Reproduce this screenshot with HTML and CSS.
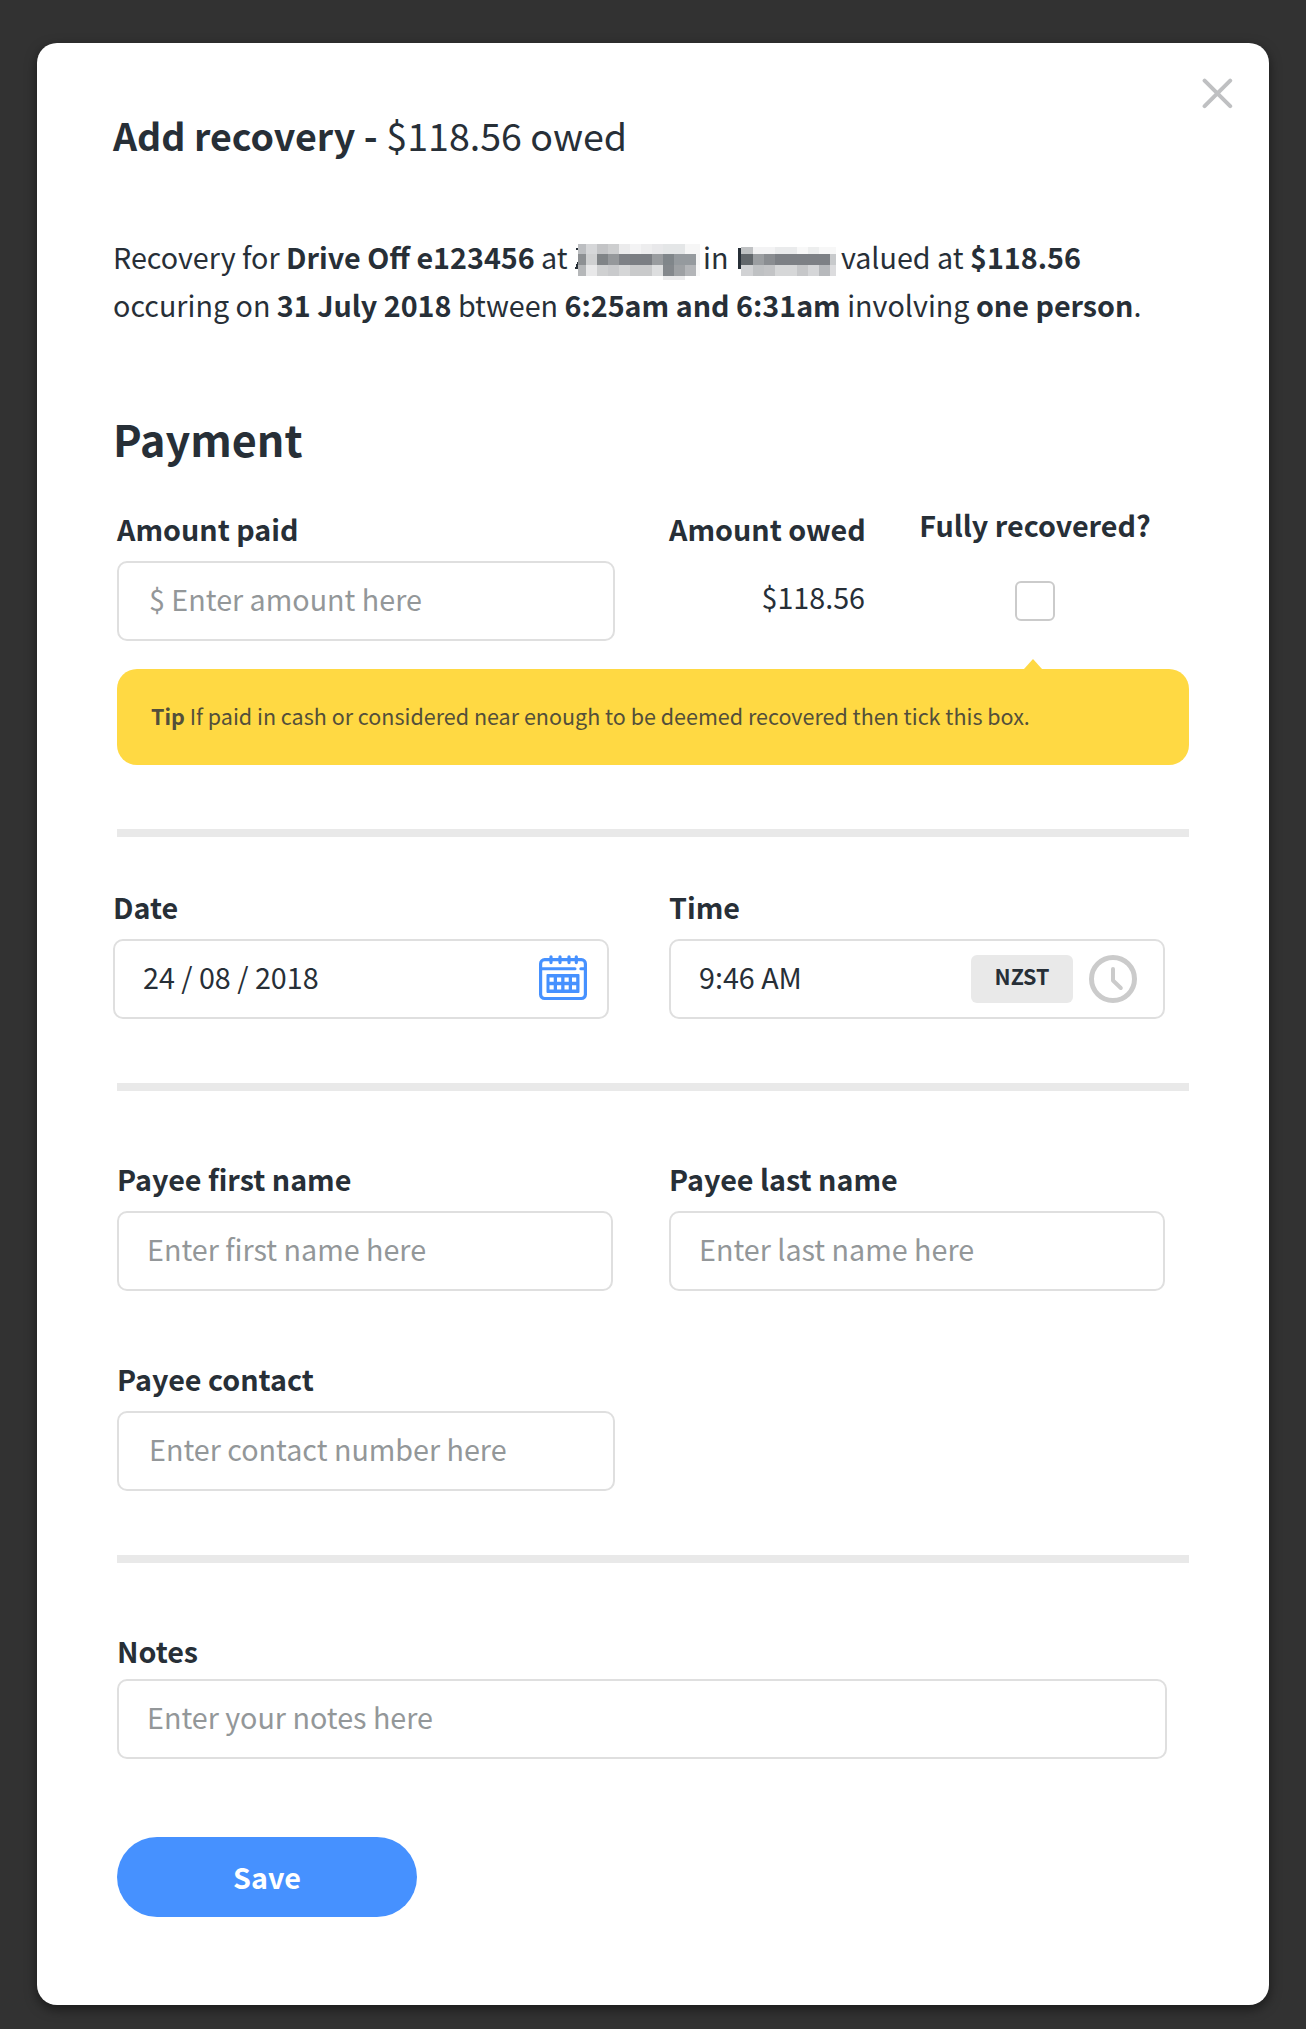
FILE: index.html
```
<!DOCTYPE html>
<html lang="en">
<head>
    <meta charset="UTF-8">
    <meta name="viewport" content="width=device-width, initial-scale=1.0">
    <title>Add recovery</title>
    <link rel="stylesheet" href="styles.css">
</head>
<body>
    <div class="modal">
        <button class="close" aria-label="Close">
            <svg width="31" height="31" viewBox="0 0 31 31" fill="none" stroke="#bfc0c2" stroke-width="4" stroke-linecap="round">
                <path d="M2.6 2.6L28.2 28.2M28.2 2.6L2.6 28.2"/>
            </svg>
        </button>

        <h1>Add recovery - <span>$118.56 owed</span></h1>

        <p class="summary">
            Recovery for <b>Drive Off e123456</b> at
            <svg class="redacted site" width="127" height="40" viewBox="575 240 127 40" shape-rendering="crispEdges">
                <path fill="#272f37" d="M577 248h2v2h-2zM578 262h1v5h-1zM577 264h2v3h-2zM576 267h3v2h-3z"/>
                <g transform="translate(0 244)">
                    <path fill="#bcbec1" d="M579 0h8v10h-8z"/><path fill="#d6d7d9" d="M587 0h11v10h-11z"/>
                    <path fill="#c3c4c6" d="M598 0h11v10h-11z"/><path fill="#cdcecf" d="M609 0h11v10h-11z"/>
                    <path fill="#ebebec" d="M620 0h11v10h-11z"/><path fill="#f3f3f4" d="M631 0h11v10h-11z"/>
                    <path fill="#ededee" d="M642 0h11v10h-11z"/><path fill="#e8e8ea" d="M653 0h11v10h-11z"/>
                    <path fill="#e4e6e7" d="M664 0h22v10h-22z"/><path fill="#f6f6f6" d="M686 0h15v10h-15z"/>
                </g>
                <g transform="translate(0 254)">
                    <path fill="#8d9093" d="M579 0h8v11h-8z"/><path fill="#cfd0d1" d="M587 0h11v11h-11z"/>
                    <path fill="#808487" d="M598 0h11v11h-11z"/><path fill="#95989b" d="M609 0h11v11h-11z"/>
                    <path fill="#7e8186" d="M620 0h11v11h-11z"/><path fill="#7b7e83" d="M631 0h22v11h-22z"/>
                    <path fill="#999c9f" d="M653 0h11v11h-11z"/><path fill="#80868a" d="M664 0h11v11h-11z"/>
                    <path fill="#959a9e" d="M675 0h22v11h-22z"/><path fill="#f5f5f5" d="M697 0h4v11h-4z"/>
                </g>
                <g transform="translate(0 265)">
                    <path fill="#b5b7b9" d="M579 0h8v11h-8z"/><path fill="#e8e8e9" d="M587 0h11v11h-11z"/>
                    <path fill="#cfd0d1" d="M598 0h11v11h-11z"/><path fill="#c9cacc" d="M609 0h11v11h-11z"/>
                    <path fill="#d5d6d7" d="M620 0h11v11h-11z"/><path fill="#c9cacb" d="M631 0h22v11h-22z"/>
                    <path fill="#dddedf" d="M653 0h11v11h-11z"/><path fill="#84888c" d="M664 0h11v11h-11z"/>
                    <path fill="#9ea1a4" d="M675 0h11v11h-11z"/><path fill="#b3b5b8" d="M686 0h11v11h-11z"/>
                    <path fill="#f8f8f8" d="M697 0h4v11h-4z"/><path fill="#ececed" d="M664 11h22v4h-22z"/>
                </g>
            </svg>in
            <svg class="redacted town" width="98" height="40" viewBox="738 240 98 40" shape-rendering="crispEdges">
                <path fill="#272f37" d="M738 248h3v21h-3z"/>
                <g transform="translate(0 247)">
                    <path fill="#c0c2c4" d="M741 0h12v7h-12z"/><path fill="#f3f3f4" d="M753 0h22v7h-22z"/>
                    <path fill="#eaebec" d="M775 0h22v7h-22z"/><path fill="#f8f8f8" d="M797 0h11v7h-11z"/>
                    <path fill="#edeeee" d="M808 0h11v7h-11z"/><path fill="#f7f7f7" d="M819 0h17v7h-17z"/>
                </g>
                <g transform="translate(0 254)">
                    <path fill="#62676b" d="M741 0h12v11h-12z"/><path fill="#9b9ea1" d="M753 0h11v11h-11z"/>
                    <path fill="#8a8d91" d="M764 0h11v11h-11z"/><path fill="#7d8085" d="M775 0h55v11h-55z"/>
                    <path fill="#c8cacc" d="M830 0h6v11h-6z"/>
                </g>
                <g transform="translate(0 265)">
                    <path fill="#d1d2d4" d="M741 0h12v11h-12z"/><path fill="#bfc1c3" d="M753 0h11v11h-11z"/>
                    <path fill="#c3c4c6" d="M764 0h11v11h-11z"/><path fill="#d6d7d8" d="M775 0h22v11h-22z"/>
                    <path fill="#c6c7c9" d="M797 0h11v11h-11z"/><path fill="#d5d6d8" d="M808 0h11v11h-11z"/>
                    <path fill="#b7b9bc" d="M819 0h11v11h-11z"/><path fill="#dcdcde" d="M830 0h6v11h-6z"/>
                </g>
            </svg>valued at <b>$118.56</b><br>
            occuring on <b>31 July 2018</b> btween <b>6:25am and 6:31am</b> involving <b>one person</b>.
        </p>

        <h2>Payment</h2>

        <div class="row payment">
            <div class="field wide">
                <label for="amount">Amount paid</label>
                <input type="text" id="amount" placeholder="$ Enter amount here">
            </div>
            <div class="owed">
                <span class="label">Amount owed</span>
                <span class="value">$118.56</span>
            </div>
            <div class="recovered">
                <label for="recovered">Fully recovered?</label>
                <input type="checkbox" id="recovered">
            </div>
        </div>

        <div class="tip"><b>Tip</b> If paid in cash or considered near enough to be deemed recovered then tick this box.</div>

        <hr>

        <div class="row when">
            <div class="field">
                <label for="date">Date</label>
                <div class="box">
                    <input type="text" id="date" value="24 / 08 / 2018">
                    <svg class="calendar" width="48" height="46" viewBox="0 0 48 46" fill="none" stroke="#4691ff" stroke-linecap="round">
                        <rect x="1.6" y="4.7" width="44.8" height="38.8" rx="4" stroke-width="3.2"/>
                        <path stroke-width="3.2" d="M12 1.8V7.6M21 1.8V7.6M30 1.8V7.6M37.3 1.8V7.6"/>
                        <path stroke-width="3" d="M2 13.7H36M41.8 13.7H46"/>
                        <path stroke="none" fill="#4691ff" fill-rule="evenodd" d="M8.5 19h31a1 1 0 0 1 1 1v17a1 1 0 0 1-1 1h-31a1 1 0 0 1-1-1V20a1 1 0 0 1 1-1zM10.5 22.5h4.2v4.2h-4.2zM18 22.5h4.2v4.2H18zM25.5 22.5h4.2v4.2h-4.2zM33 22.5h4.2v4.2H33zM10.5 30.3h4.2v4.2h-4.2zM18 30.3h4.2v4.2H18zM25.5 30.3h4.2v4.2h-4.2zM33 30.3h4.2v4.2H33z"/>
                    </svg>
                </div>
            </div>
            <div class="field">
                <label for="time">Time</label>
                <div class="box">
                    <input type="text" id="time" value="9:46 AM">
                    <span class="zone">NZST</span>
                    <svg class="clock" width="48" height="48" viewBox="0 0 48 48" fill="none" stroke="#cbcbcb">
                        <circle cx="24" cy="24" r="21.5" stroke-width="5"/>
                        <path d="M24 14V25.5L31.8 33" stroke-width="4" stroke-linecap="round" stroke-linejoin="round"/>
                    </svg>
                </div>
            </div>
        </div>

        <hr>

        <div class="row">
            <div class="field">
                <label for="first">Payee first name</label>
                <input type="text" id="first" placeholder="Enter first name here">
            </div>
            <div class="field">
                <label for="last">Payee last name</label>
                <input type="text" id="last" placeholder="Enter last name here">
            </div>
        </div>

        <div class="row">
            <div class="field wide">
                <label for="contact">Payee contact</label>
                <input type="text" id="contact" placeholder="Enter contact number here">
            </div>
        </div>

        <hr>

        <div class="row">
            <div class="field notes">
                <label for="notes">Notes</label>
                <input type="text" id="notes" placeholder="Enter your notes here">
            </div>
        </div>

        <button class="save">Save</button>
    </div>
</body>
</html>
```
FILE: styles.css
```
* {
    box-sizing: border-box;
}

body {
    margin: 0;
    padding: 43px 37px 24px;
    background-color: #323232;
    font-family: "Source Sans Pro", "Noto Sans CJK SC", sans-serif;
    font-size: 28.7px;
    color: #272f37;
}

.modal {
    position: relative;
    height: 1962px;
    padding: 68px 80px 88px;
    background-color: #ffffff;
    border-radius: 20px;
    box-shadow: 0 4px 12px rgba(0, 0, 0, 0.5);
}

.close {
    position: absolute;
    top: 35px;
    right: 36px;
    padding: 0;
    border: none;
    background: none;
    cursor: pointer;
}

.close svg {
    display: block;
}

h1 {
    margin: 0 0 74px -4px;
    font-size: 37.6px;
    line-height: 48px;
    font-weight: 700;
}

h1 span {
    font-weight: 400;
}

.summary {
    margin: 0 0 79px -4px;
    line-height: 48px;
    white-space: nowrap;
}

.redacted {
    height: 40px;
    margin-top: -10px;
    vertical-align: -11px;
}

.site {
    margin-right: 2px;
}

.town {
    margin-left: 3px;
    margin-right: 5px;
}

h2 {
    margin: 0 0 40px -4px;
    font-size: 43.1px;
    line-height: 60px;
    font-weight: 700;
}

.row {
    display: flex;
    gap: 56px;
    margin-top: 67px;
}

.payment {
    gap: 0;
    margin-top: 0;
}

.when {
    gap: 60px;
    margin-top: 49px;
    margin-left: -4px;
}

.field {
    width: 496px;
}

.field.wide {
    width: 498px;
}

.field.notes {
    width: 1050px;
}

label, .label {
    display: block;
    margin-bottom: 12px;
    padding-top: 1px;
    line-height: 40px;
    font-weight: 700;
    white-space: nowrap;
}

.notes label {
    margin-bottom: 8px;
}

input[type="text"] {
    display: block;
    width: 100%;
    height: 80px;
    padding: 0 28px 5px 28px;
    border: 2px solid #dfdfdf;
    border-radius: 10px;
    background-color: #ffffff;
    font-family: inherit;
    font-size: inherit;
    color: inherit;
}

.wide input[type="text"] {
    padding-left: 30px;
}

input::placeholder {
    color: #939799;
    opacity: 1;
}

input:focus {
    outline: none;
    border-color: #4691ff;
}

.box {
    display: flex;
    align-items: center;
    height: 80px;
    padding-right: 20px;
    border: 2px solid #dfdfdf;
    border-radius: 10px;
}

.box input[type="text"] {
    flex: 1;
    min-width: 0;
    height: 76px;
    border: none;
}

.calendar {
    margin-top: -3px;
}

.zone {
    width: 102px;
    height: 48px;
    border-radius: 6px;
    background-color: #e9e9e9;
    font-size: 21.5px;
    font-weight: 700;
    line-height: 42px;
    text-align: center;
}

.clock {
    margin-left: 16px;
    margin-right: 6px;
}

.owed {
    width: 195px;
    margin-left: 54px;
    text-align: right;
}

.owed .value {
    display: block;
    margin-top: 28px;
    margin-right: -1px;
    line-height: 40px;
}

.recovered {
    display: flex;
    flex-direction: column;
    align-items: center;
    width: 230px;
    margin: -4px 0 0 56px;
}

.recovered input {
    appearance: none;
    width: 40px;
    height: 40px;
    margin: 24px 0 0;
    border: 2px solid #cbcbcb;
    border-radius: 6px;
    background-color: #ffffff;
}

.tip {
    position: relative;
    height: 96px;
    margin-top: 28px;
    padding-left: 34px;
    border-radius: 20px;
    background-color: #ffd943;
    font-size: 21.52px;
    line-height: 93px;
    color: #534f3a;
    white-space: nowrap;
}

/* pointer towards the checkbox */
.tip::before {
    content: "";
    position: absolute;
    top: -10px;
    left: 907px;
    border: 9px solid transparent;
    border-top: none;
    border-bottom: 10px solid #ffd943;
}

hr {
    height: 8px;
    margin: 64px 0 0;
    border: none;
    background-color: #e9e9e9;
}

.save {
    display: block;
    width: 300px;
    height: 80px;
    margin-top: 78px;
    padding: 0 0 2px;
    border: none;
    border-radius: 40px;
    background-color: #4691ff;
    color: #ffffff;
    font-family: inherit;
    font-size: 28.7px;
    font-weight: 700;
    cursor: pointer;
}
```
